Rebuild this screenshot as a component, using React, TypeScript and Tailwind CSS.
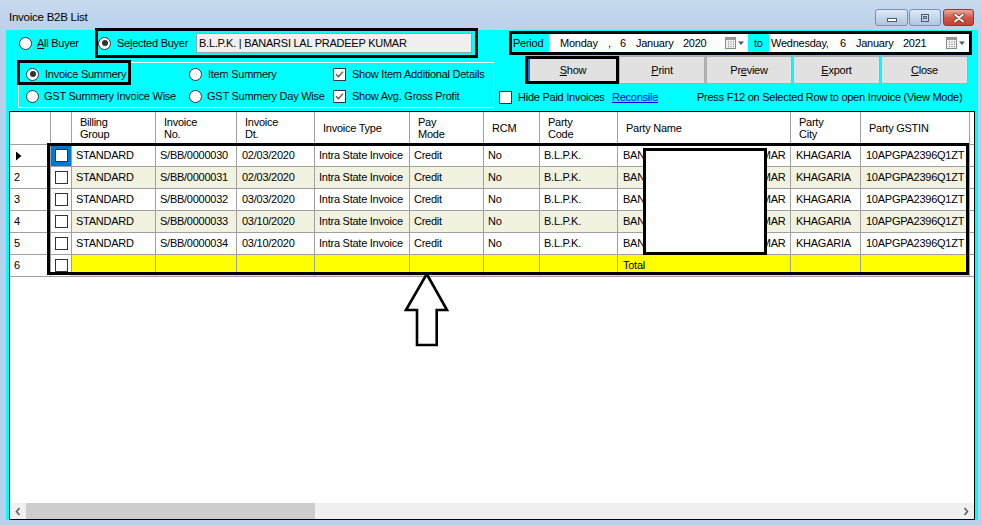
import React from 'react';

const colW = [
  'w-[41px]',
  'w-[21px]',
  'w-[84px]',
  'w-[81px]',
  'w-[78px]',
  'w-[95px]',
  'w-[74px]',
  'w-[56px]',
  'w-[78px]',
  'w-[173px]',
  'w-[70px]',
  'w-[109px]',
];

const headers: string[][] = [
  [],
  [],
  ['Billing', 'Group'],
  ['Invoice', 'No.'],
  ['Invoice', 'Dt.'],
  ['Invoice Type'],
  ['Pay', 'Mode'],
  ['RCM'],
  ['Party', 'Code'],
  ['Party Name'],
  ['Party', 'City'],
  ['Party GSTIN'],
];

const invoices = [
  { no: 'S/BB/0000030', dt: '02/03/2020' },
  { no: 'S/BB/0000031', dt: '02/03/2020' },
  { no: 'S/BB/0000032', dt: '03/03/2020' },
  { no: 'S/BB/0000033', dt: '03/10/2020' },
  { no: 'S/BB/0000034', dt: '03/10/2020' },
];

function Radio({ checked }: { checked?: boolean }) {
  return (
    <span className="inline-flex h-[13px] w-[13px] shrink-0 items-center justify-center rounded-full border border-[#333333] bg-white">
      {checked && <span className="h-[6px] w-[6px] rounded-full bg-[#333333]" />}
    </span>
  );
}

function Check({ checked }: { checked?: boolean }) {
  return (
    <span className="inline-flex h-[13px] w-[13px] shrink-0 items-center justify-center border border-[#333333] bg-white">
      {checked && (
        <svg width="9" height="9" viewBox="0 0 9 9">
          <path d="M1 4.3 L3.5 6.8 L8 1.6" fill="none" stroke="#555" strokeWidth="1.3" />
        </svg>
      )}
    </span>
  );
}

function CalendarIcon() {
  return (
    <svg width="22" height="14" viewBox="0 0 22 14" className="shrink-0">
      <rect x="1.5" y="1.5" width="10" height="11" fill="#f0f0f0" stroke="#8a8a8a" />
      <rect x="1.5" y="1.5" width="10" height="2.5" fill="#9a9a9a" />
      <path d="M4 6h1M6.5 6h1M9 6h1M4 8.3h1M6.5 8.3h1M9 8.3h1M4 10.6h1M6.5 10.6h1M9 10.6h1" stroke="#777" />
      <path d="M14 5.5h6l-3 3.5z" fill="#555" />
    </svg>
  );
}

function WinButton({ kind }: { kind: 'min' | 'max' | 'close' }) {
  if (kind === 'close') {
    return (
      <div className="ml-[2px] flex h-[17px] w-[31px] items-center justify-center rounded-[3px] border border-[#8d3a2e] bg-gradient-to-b from-[#e9a99b] via-[#d0594a] to-[#c3402f]">
        <svg width="12" height="10" viewBox="0 0 12 10">
          <path d="M2 1.5 L10 8.5 M10 1.5 L2 8.5" stroke="#6b2a20" strokeWidth="3.4" strokeLinecap="round" />
          <path d="M2 1.5 L10 8.5 M10 1.5 L2 8.5" stroke="#ffffff" strokeWidth="2" strokeLinecap="round" />
        </svg>
      </div>
    );
  }
  return (
    <div
      className={`flex h-[17px] items-center justify-center rounded-[3px] border border-[#7891b2] bg-gradient-to-b from-[#dde8f5] to-[#afc6e1] ${
        kind === 'min' ? 'w-[33px]' : 'ml-[1px] w-[32px]'
      }`}
    >
      {kind === 'min' ? (
        <svg width="12" height="10" viewBox="0 0 12 10">
          <rect x="1.5" y="5.5" width="9" height="3" fill="#ffffff" stroke="#4a5a72" />
        </svg>
      ) : (
        <svg width="12" height="10" viewBox="0 0 12 10">
          <rect x="2.5" y="1.5" width="7" height="7" fill="none" stroke="#4a5a72" />
          <rect x="4.5" y="3.5" width="3" height="2" fill="none" stroke="#4a5a72" />
        </svg>
      )}
    </div>
  );
}

function Button({ label, w }: { label: React.ReactNode; w: string }) {
  return (
    <div className={`ml-[1px] flex h-full ${w} items-center justify-center border border-[#adadad] bg-[#e1e1e1]`}>
      {label}
    </div>
  );
}

function Cell({ i, children, className = '' }: { i: number; children?: React.ReactNode; className?: string }) {
  return (
    <div
      className={`flex h-full shrink-0 items-center overflow-hidden whitespace-nowrap border-r border-[#a0a0a0] ${colW[i]} ${className}`}
    >
      {children}
    </div>
  );
}

export default function App() {
  return (
    <div className="flex h-[525px] w-[982px] flex-col overflow-hidden whitespace-nowrap bg-[#b9d1ea] font-['Liberation_Sans',Arial,sans-serif] text-[11px] leading-[13px] tracking-[-0.25px] text-black">
      {/* title bar */}
      <div className="flex h-[30px] shrink-0 items-start justify-between bg-gradient-to-b from-[#c8daee] to-[#b9d1ea] pl-[9px] pr-[8px]">
        <span className="pt-[11px] text-[11.5px]">Invoice B2B List</span>
        <div className="mt-[9px] flex">
          <WinButton kind="min" />
          <WinButton kind="max" />
          <WinButton kind="close" />
        </div>
      </div>

      <div className="mb-[5px] ml-[6px] mr-[4px] flex flex-1 flex-col bg-[#00ffff] px-[3px]">
        {/* filters */}
        <div className="flex h-[81px] shrink-0">
          <div className="flex w-[488px] shrink-0 flex-col">
            <div className="flex h-[30px] items-start">
              <div className="flex w-[86px] items-center gap-[5px] pl-[10px] pt-[7px]">
                <Radio />
                <span>
                  <span className="underline">A</span>ll Buyer
                </span>
              </div>
              <div className="-mt-[2px] flex h-[30px] w-[383px] items-center border-[3px] border-black">
                <Radio checked />
                <span className="ml-[6px]">
                  Se<span className="underline">l</span>ected Buyer
                </span>
                <div className="ml-auto mr-[3px] flex h-[20px] w-[276px] items-center border border-[#a0a0a0] bg-[#f0f0f0] pl-[2px]">
                  B.L.P.K. | BANARSI LAL PRADEEP KUMAR
                </div>
              </div>
            </div>

            <div className="relative ml-[9px] mt-[2px] h-[46px] w-[476px] border border-white">
              <div className="grid h-full grid-cols-[163px_144px_1fr] grid-rows-2 pl-[7px]">
                <div className="flex items-center gap-[6px]">
                  <Radio checked />
                  <span>Invoice Summery</span>
                </div>
                <div className="flex items-center gap-[6px]">
                  <Radio />
                  <span>Item Summery</span>
                </div>
                <div className="flex items-center gap-[6px]">
                  <Check checked />
                  <span>Show Item Additional Details</span>
                </div>
                <div className="flex items-center gap-[5px]">
                  <Radio />
                  <span>GST Summery Invoice Wise</span>
                </div>
                <div className="flex items-center gap-[5px]">
                  <Radio />
                  <span>GST Summery Day Wise</span>
                </div>
                <div className="flex items-center gap-[6px]">
                  <Check checked />
                  <span>Show Avg. Gross Profit</span>
                </div>
              </div>
              <div className="pointer-events-none absolute left-[-2px] top-[-3px] h-[25px] w-[114px] border-[3px] border-black" />
            </div>
          </div>

          <div className="flex flex-1 flex-col">
            <div className="ml-[12px] mt-[1px] flex h-[24px] w-[463px] items-stretch border-[3px] border-black">
              <span className="flex w-[37px] items-center pl-[1px]">Period</span>
              <div className="flex w-[199px] items-center bg-white pl-[11px]">
                <span className="w-[48px]">Monday</span>
                <span className="w-[12px]">,</span>
                <span className="w-[16px]">6</span>
                <span className="w-[47px]">January</span>
                <span>2020</span>
                <span className="ml-auto mr-[2px] flex">
                  <CalendarIcon />
                </span>
              </div>
              <span className="flex w-[21px] items-center pl-[6px]">to</span>
              <div className="flex w-[200px] items-center bg-white pl-[2px]">
                <span className="w-[69px]">Wednesday,</span>
                <span className="w-[16px]">6</span>
                <span className="w-[47px]">January</span>
                <span>2021</span>
                <span className="ml-auto mr-[2px] flex">
                  <CalendarIcon />
                </span>
              </div>
            </div>

            <div className="ml-[28px] mt-[1px] flex h-[28px]">
              <div className="h-full w-[94px] border-[3px] border-black">
                <div className="flex h-full items-center justify-center border-l-2 border-[#0078d7] bg-[#e1e1e1]">
                  <span>
                    <span className="underline">S</span>how
                  </span>
                </div>
              </div>
              <div className="flex h-full w-[86px] items-center justify-center border border-[#adadad] bg-[#e1e1e1]">
                <span>
                  <span className="underline">P</span>rint
                </span>
              </div>
              <Button
                w="w-[86px]"
                label={
                  <span>
                    Pr<span className="underline">e</span>view
                  </span>
                }
              />
              <Button
                w="w-[87px]"
                label={
                  <span>
                    <span className="underline">E</span>xport
                  </span>
                }
              />
              <Button
                w="w-[87px]"
                label={
                  <span>
                    <span className="underline">C</span>lose
                  </span>
                }
              />
            </div>

            <div className="mt-[6px] flex h-[14px] items-center pl-[2px]">
              <Check />
              <span className="ml-[6px] w-[94px]">Hide Paid Invoices</span>
              <span className="w-[85px]">
                <span className="text-[#0000ff] underline">Reconsile</span>
              </span>
              <span>Press F12 on Selected Row to open Invoice (View Mode)</span>
            </div>
          </div>
        </div>

        {/* grid */}
        <div className="relative flex flex-1 flex-col overflow-hidden border border-black bg-white">
          <div className="flex h-[33px] shrink-0 border-b border-[#a0a0a0]">
            {headers.map((h, i) => (
              <Cell key={i} i={i} className="pl-[8px] leading-[12px]">
                <div className="flex flex-col">
                  {h.map((line) => (
                    <span key={line}>{line}</span>
                  ))}
                </div>
              </Cell>
            ))}
          </div>

          {invoices.map((inv, r) => {
            const bg = r % 2 === 1 ? 'bg-[#f2f2e0]' : 'bg-white';
            return (
              <div key={inv.no} className="flex h-[22px] shrink-0 border-b border-[#a0a0a0]">
                <Cell i={0} className="bg-white pl-[4px]">
                  {r === 0 ? (
                    <svg width="8" height="10" viewBox="0 0 8 10" className="ml-[1px]">
                      <path d="M1 0.5 L6.5 5 L1 9.5 Z" fill="#000" />
                    </svg>
                  ) : (
                    r + 1
                  )}
                </Cell>
                <Cell i={1} className={`justify-center ${r === 0 ? 'bg-[#0078d7]' : 'bg-white'}`}>
                  <Check />
                </Cell>
                <Cell i={2} className={`${bg} pl-[4px]`}>STANDARD</Cell>
                <Cell i={3} className={`${bg} pl-[4px]`}>{inv.no}</Cell>
                <Cell i={4} className={`${bg} pl-[5px]`}>{inv.dt}</Cell>
                <Cell i={5} className={`${bg} pl-[4px]`}>Intra State Invoice</Cell>
                <Cell i={6} className={`${bg} pl-[4px]`}>Credit</Cell>
                <Cell i={7} className={`${bg} pl-[4px]`}>No</Cell>
                <Cell i={8} className={`${bg} pl-[4px]`}>B.L.P.K.</Cell>
                <Cell i={9} className={`${bg} pl-[5px]`}>BANARSI LAL PRADEEP KUMAR</Cell>
                <Cell i={10} className={`${bg} pl-[5px]`}>KHAGARIA</Cell>
                <Cell i={11} className={`${bg} pl-[5px]`}>10APGPA2396Q1ZT</Cell>
              </div>
            );
          })}

          <div className="flex h-[22px] shrink-0 border-b border-[#a0a0a0]">
            <Cell i={0} className="bg-white pl-[4px]">6</Cell>
            <Cell i={1} className="justify-center bg-white">
              <Check />
            </Cell>
            {[2, 3, 4, 5, 6, 7, 8].map((i) => (
              <Cell key={i} i={i} className="bg-[#ffff00]" />
            ))}
            <Cell i={9} className="bg-[#ffff00] pl-[5px]">Total</Cell>
            <Cell i={10} className="bg-[#ffff00]" />
            <Cell i={11} className="bg-[#ffff00]" />
          </div>

          <div className="flex-1" />

          {/* horizontal scrollbar */}
          <div className="flex h-[16px] shrink-0 items-stretch bg-[#f0f0f0]">
            <div className="flex w-[16px] items-center justify-center">
              <svg width="6" height="9" viewBox="0 0 6 9">
                <path d="M4.5 1 L1.5 4.5 L4.5 8" fill="none" stroke="#606060" strokeWidth="1.6" />
              </svg>
            </div>
            <div className="w-[289px] bg-[#cdcdcd]" />
            <div className="flex-1" />
            <div className="flex w-[16px] items-center justify-center">
              <svg width="6" height="9" viewBox="0 0 6 9">
                <path d="M1.5 1 L4.5 4.5 L1.5 8" fill="none" stroke="#606060" strokeWidth="1.6" />
              </svg>
            </div>
          </div>

          {/* annotations */}
          <div className="pointer-events-none absolute left-[37px] top-[31px] h-[132px] w-[922px] border-[3px] border-black" />
          <div className="pointer-events-none absolute left-[633px] top-[36px] h-[107px] w-[124px] border-[3px] border-black bg-white" />
          <svg
            width="46"
            height="76"
            viewBox="0 0 46 76"
            className="pointer-events-none absolute left-[394px] top-[160px]"
          >
            <path
              d="M22.7 2 L43 38 L32.7 38 L32.7 73 L13 73 L13 38 L2 38 Z"
              fill="#ffffff"
              stroke="#000000"
              strokeWidth="2.6"
              strokeLinejoin="miter"
            />
          </svg>
        </div>
      </div>
    </div>
  );
}
